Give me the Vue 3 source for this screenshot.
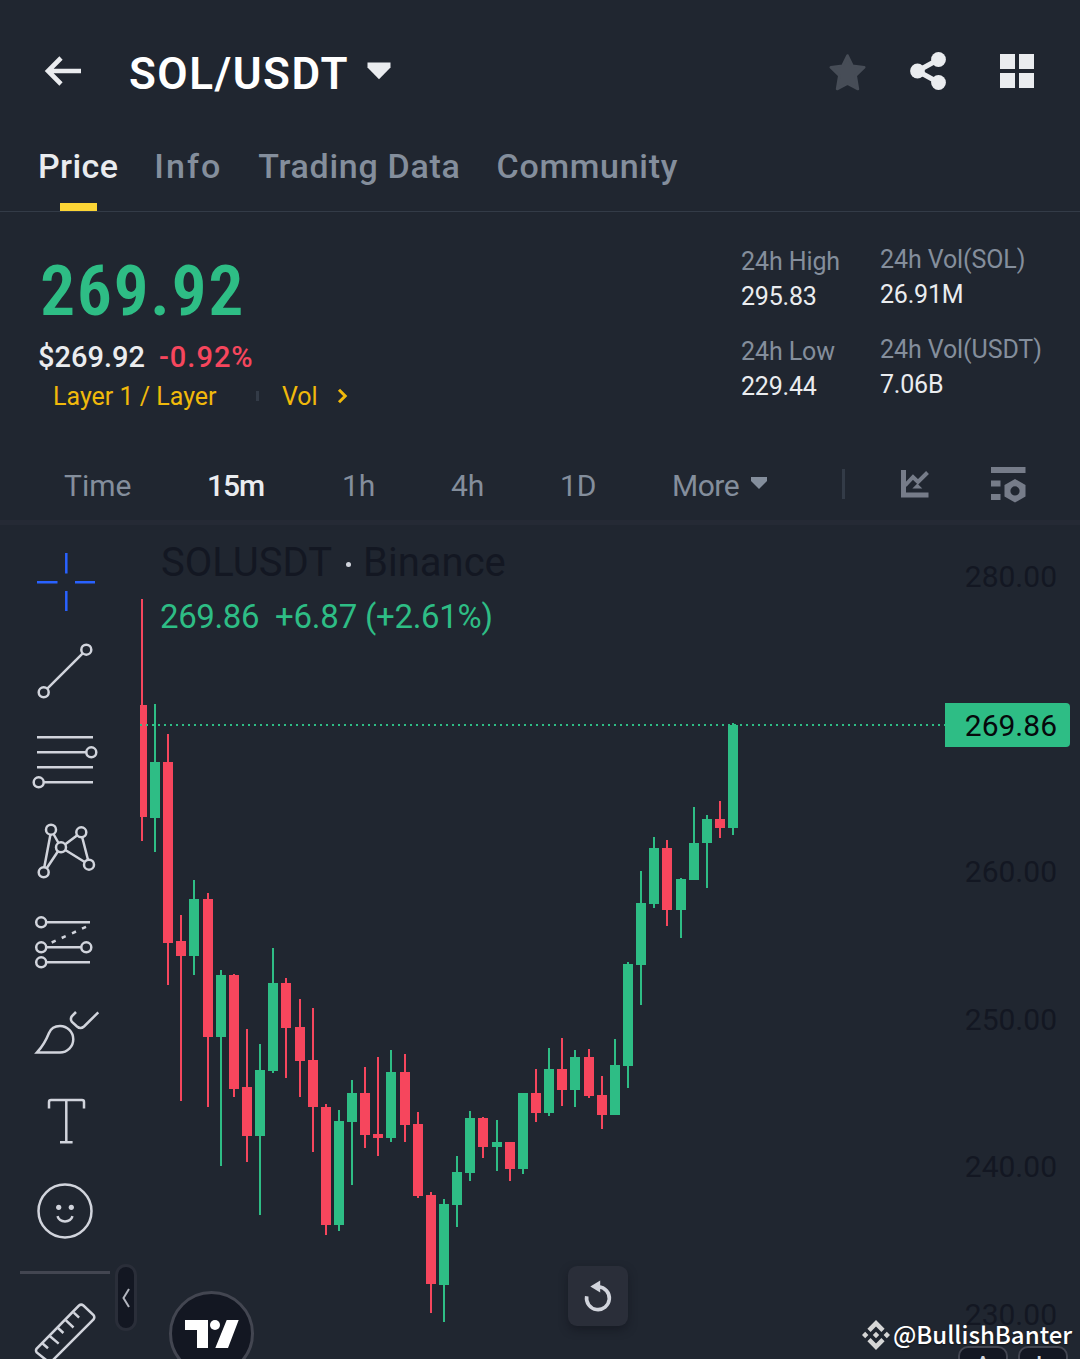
<template>
  <div class="page">
    <header class="header">
      <svg class="back" width="38" height="30" viewBox="0 0 38 30">
        <path d="M17 2 4 15l13 13M4 15h33" fill="none" stroke="#eaecef" stroke-width="4.6" />
      </svg>
      <h1 class="title">SOL/USDT</h1>
      <svg class="caret" width="24" height="18" viewBox="0 0 24 18">
        <path d="M0.5 0.5h23v5L12 17.3 0.5 5.5z" fill="#eaecef" />
      </svg>
      <div class="actions">
        <svg class="star" width="38" height="39" viewBox="0 0 38 39">
          <path
            d="M18.5 3.5l5 10.3 11.7 1.5-8.5 8.3 2.2 13.4L18.5 31.6 8.1 37l2.2-13.4-8.5-8.3 11.7-1.5z"
            fill="#474d57"
            stroke="#474d57"
            stroke-width="2.6"
            stroke-linejoin="round"
          />
        </svg>
        <svg width="37" height="38" viewBox="0 0 37 38">
          <path d="M28.5 7.5 7.5 19l21 11.5" fill="none" stroke="#eaecef" stroke-width="5" />
          <circle cx="28.5" cy="7.5" r="7.4" fill="#eaecef" />
          <circle cx="7.5" cy="19" r="7.4" fill="#eaecef" />
          <circle cx="28.5" cy="30.5" r="7.4" fill="#eaecef" />
        </svg>
        <svg width="34" height="34" viewBox="0 0 34 34">
          <path d="M0 0h15v15H0zM19 0h15v15H19zM0 19h15v15H0zM19 19h15v15H19z" fill="#eaecef" />
        </svg>
      </div>
    </header>

    <nav class="tabs">
      <span
        v-for="tab in tabs"
        :key="tab"
        class="tab"
        :class="{ active: tab === activeTab }"
        @click="activeTab = tab"
      >{{ tab }}</span>
    </nav>

    <section class="summary">
      <div class="price-box">
        <div class="price">269.92</div>
        <div class="sub-price">
          <span class="fiat">$269.92</span>
          <span class="change">-0.92%</span>
        </div>
        <div class="tags">
          <span class="tag-name">Layer 1 / Layer</span>
          <i class="tag-line"></i>
          <span class="tag-vol">Vol</span>
          <svg width="11" height="16" viewBox="0 0 11 16">
            <path d="M2 1.8 8.2 8 2 14.2" fill="none" stroke="#f0b90b" stroke-width="3" />
          </svg>
        </div>
      </div>
      <div v-for="(col, i) in stats" :key="i" class="stats">
        <div v-for="item in col" :key="item.label" class="stat">
          <div class="stat-label">{{ item.label }}</div>
          <div class="stat-value">{{ item.value }}</div>
        </div>
      </div>
    </section>

    <div class="intervals">
      <span
        v-for="item in intervals"
        :key="item"
        class="interval"
        :class="{ active: item === activeInterval }"
        @click="activeInterval = item"
      >{{ item }}</span>
      <span class="more">More</span>
      <svg class="more-caret" width="16" height="12" viewBox="0 0 16 12">
        <path d="M0 0h16v4l-8 8-8-8z" fill="#848e9c" />
      </svg>
      <i class="split"></i>
      <svg class="chart-icon" width="28" height="28" viewBox="0 0 28 28">
        <path d="M2.5 0v25H27.5" fill="none" stroke="#767c89" stroke-width="5" />
        <path d="M4 15.5l8-8.5 5 5L26.5 2.5" fill="none" stroke="#767c89" stroke-width="4" />
        <path d="M16.3 13.5l5 5h-10z" fill="#767c89" />
      </svg>
      <svg width="35" height="36" viewBox="0 0 35 36">
        <path d="M0 0h34.5v6H0zM0 13.5h9.5v6H0zM0 27h9.5v6H0z" fill="#767c89" />
        <path
          d="M24 12l10.5 6v11.5L24 35.5l-10.5-6V18zM24 19.3a4.6 4.6 0 1 0 0 9.2 4.6 4.6 0 0 0 0-9.2z"
          fill="#767c89"
          fill-rule="evenodd"
        />
      </svg>
    </div>

    <main class="chart">
      <aside class="tools">
        <svg v-for="tool in tools" :key="tool.name" class="tool" :class="tool.name" viewBox="0 0 130 90">
          <path :d="tool.path" />
          <circle v-for="(c, i) in tool.circles" :key="i" :cx="c[0]" :cy="c[1]" :r="c[2] || 5" />
          <circle v-for="(c, i) in tool.dots" :key="'d' + i" class="dot" :cx="c[0]" :cy="c[1]" :r="c[2]" />
        </svg>
        <div class="tools-line"></div>
        <svg class="tool" viewBox="0 0 130 90">
          <path d="M79 31.5q2.2-1.8 4.4 0L93.5 41q1.6 2.2 0 4.4L50 89 36.7 78.5q-1.4-2 0-4z" />
          <path d="M42.3 69.3l5.7 5M49.7 62l9 7.6M58 54l5.4 5M65.7 46.2l7.8 7.3M73.8 38.7l5.3 5" />
        </svg>
      </aside>

      <svg class="plot" width="950" height="834" viewBox="130 525 950 834">
        <g v-for="c in candles" :key="c[0]" :fill="c[1] ? '#2ebd85' : '#f6465d'">
          <rect :x="c[0] - 1" :y="c[2]" width="2" :height="c[5] - c[2]" />
          <rect
            :x="Math.max(c[0] - 5, 140)"
            :y="c[3]"
            :width="c[0] + 5 - Math.max(c[0] - 5, 140)"
            :height="c[4] - c[3]"
          />
        </g>
        <path d="M140 725H945" stroke="#2ebd85" stroke-width="2" stroke-dasharray="2 4" />
        <text v-for="t in ticks" :key="t.label" class="tick" x="1057" :y="t.y">{{ t.label }}</text>
        <path d="M945 703h121a4 4 0 0 1 4 4v36a4 4 0 0 1-4 4H945z" fill="#2ebd85" />
        <text class="tick current" x="1057" y="736">269.86</text>
      </svg>

      <div class="legend">
        <div class="legend-name"><span>SOLUSDT</span><i></i><span class="exchange">Binance</span></div>
        <div class="legend-values">
          <span class="last">269.86</span>
          <span class="diff">+6.87</span>
          <span class="percent">(+2.61%)</span>
        </div>
      </div>

      <div class="collapse">
        <svg width="8" height="20" viewBox="0 0 8 20">
          <path d="M7 1 1.5 10 7 19" fill="none" stroke="#b2b5be" stroke-width="2" />
        </svg>
      </div>

      <div class="tv">
        <svg width="54" height="28" viewBox="0 0 54 28">
          <path d="M0 0h23v28H12V10H0zM41.7 0h12L43 28H30.3z" fill="#fff" />
          <circle cx="30" cy="5" r="5" fill="#fff" />
        </svg>
      </div>

      <button class="reset">
        <svg width="30" height="32" viewBox="0 0 30 32">
          <path d="M3.7 16.3A11.4 11.4 0 1 0 15.5 6.8" fill="none" stroke="#d1d4dc" stroke-width="3.6" />
          <path d="M7.3 6.5 17.2 0.6v11.8z" fill="#d1d4dc" />
        </svg>
      </button>

      <div class="scale-btn auto">A</div>
      <div class="scale-btn log">L</div>

      <div class="author">
        <svg width="28" height="30" viewBox="0 0 28 30">
          <path
            d="M14 0l8.6 8.8-3.2 3.3L14 6.6l-5.4 5.5-3.2-3.3zM14 30l8.6-8.8-3.2-3.3-5.4 5.5-5.4-5.5-3.2 3.3zM3.2 11.8L6.4 15l-3.2 3.2L0 15zM14 11.8l3.2 3.2-3.2 3.2-3.2-3.2zM24.8 11.8L28 15l-3.2 3.2-3.2-3.2z"
            fill="#d6d6d6"
          />
        </svg>
        <span>@BullishBanter</span>
      </div>
    </main>
  </div>
</template>

<script setup>
import { ref } from 'vue';

const tabs = ['Price', 'Info', 'Trading Data', 'Community'];
const activeTab = ref('Price');

const intervals = ['Time', '15m', '1h', '4h', '1D'];
const activeInterval = ref('15m');

const stats = [
  [
    { label: '24h High', value: '295.83' },
    { label: '24h Low', value: '229.44' },
  ],
  [
    { label: '24h Vol(SOL)', value: '26.91M' },
    { label: '24h Vol(USDT)', value: '7.06B' },
  ],
];

const ticks = [
  { label: '280.00', y: 587 },
  { label: '260.00', y: 882 },
  { label: '250.00', y: 1030 },
  { label: '240.00', y: 1177 },
  { label: '230.00', y: 1325 },
];

const tools = [
  { name: 'cross', path: 'M66.3 16v20.5M66.3 54v20M37 45.2h20.5M75 45.2h20' },
  { name: 'trend', path: 'M47.3 61.7 82.7 26.3', circles: [[86.3, 22.7], [43.7, 65.3]] },
  {
    name: 'fib',
    path: 'M37 20.3h56M37 35.3h49M37 50.3h56M44 65.3h49',
    circles: [[91.3, 35.3], [38.7, 65.3]],
  },
  {
    name: 'pattern',
    path: 'M53.5 27l5 9M50.4 27.7 44.3 60.3M46.7 61.3 58 44.3M65.3 37.3 77.3 28.3M82.2 30.3 88 52.7M65.3 43 84.7 55',
    circles: [[51, 22.7], [81.3, 25.3], [61, 40.3], [43.7, 65.3], [89, 57.7]],
  },
  {
    name: 'forecast',
    path: 'M46 25.3h44M46 50.3h35.3M46 65.3h44M51.7 45.5l4-1.8M61.7 41l4-1.8M72 36.3l4-1.8M82 31.6l4-1.8',
    circles: [[41.2, 25.3], [41.2, 50.3], [86.3, 50.3], [41.2, 65.3]],
  },
  {
    name: 'brush',
    path: 'M37 65.4C44 58 47 51 49 46 51 41 55 38.9 60 38.9A13.2 13.2 0 0 1 60 65.4zM76 25l-4 4q-2.2 3 0 6l5 4.5q3.5 3 7 0L98.3 25.3',
  },
  { name: 'text', path: 'M49 31.5V25q0-2 2-2h31q2 0 2 2v6.5M66.3 23v42.3M60 65.3h12.6' },
  {
    name: 'emoji',
    path: 'M57.5 49.2a7.8 7.2 0 0 0 15 0',
    circles: [[65, 44, 26.5]],
    dots: [[58.7, 40.3, 2.6], [71.3, 40.3, 2.6]],
  },
];

// [x, rising, wick top, body top, body bottom, wick bottom]
const candles = [
  [142, 0, 599, 705, 817, 841],
  [155, 1, 704, 762, 818, 852],
  [168, 0, 734, 762, 943, 985],
  [181, 0, 915, 941, 956, 1101],
  [194, 1, 880, 899, 956, 975],
  [208, 0, 893, 899, 1037, 1107],
  [221, 1, 970, 975, 1037, 1166],
  [234, 0, 974, 975, 1089, 1097],
  [247, 0, 1029, 1087, 1136, 1162],
  [260, 1, 1044, 1070, 1136, 1215],
  [273, 1, 948, 983, 1071, 1073],
  [286, 0, 978, 983, 1028, 1078],
  [300, 0, 999, 1027, 1061, 1097],
  [313, 0, 1008, 1060, 1107, 1152],
  [326, 0, 1104, 1107, 1225, 1235],
  [339, 1, 1110, 1121, 1225, 1231],
  [352, 1, 1080, 1093, 1122, 1185],
  [365, 0, 1067, 1093, 1135, 1148],
  [378, 0, 1057, 1134, 1138, 1156],
  [391, 1, 1050, 1072, 1138, 1142],
  [405, 0, 1054, 1072, 1125, 1142],
  [418, 0, 1112, 1124, 1196, 1198],
  [431, 0, 1192, 1195, 1284, 1313],
  [444, 1, 1199, 1204, 1285, 1322],
  [457, 1, 1156, 1172, 1205, 1227],
  [470, 1, 1111, 1118, 1173, 1181],
  [483, 0, 1117, 1118, 1147, 1158],
  [497, 1, 1120, 1142, 1147, 1171],
  [510, 0, 1142, 1142, 1169, 1181],
  [523, 1, 1093, 1093, 1169, 1174],
  [536, 0, 1069, 1093, 1113, 1122],
  [549, 1, 1048, 1069, 1113, 1116],
  [562, 0, 1038, 1069, 1090, 1106],
  [575, 1, 1050, 1057, 1090, 1107],
  [589, 0, 1049, 1057, 1096, 1098],
  [602, 0, 1076, 1095, 1115, 1129],
  [615, 1, 1039, 1065, 1115, 1115],
  [628, 1, 962, 964, 1066, 1088],
  [641, 1, 871, 903, 965, 1005],
  [654, 1, 837, 848, 904, 908],
  [667, 0, 840, 848, 910, 926],
  [681, 1, 878, 879, 910, 938],
  [694, 1, 807, 843, 880, 880],
  [707, 1, 815, 819, 843, 888],
  [720, 0, 801, 819, 828, 838],
  [733, 1, 723, 725, 828, 835],
];
</script>

<style>
body {
  background: #202630;
}
</style>

<style scoped>
.page {
  width: 1080px;
  height: 1359px;
  overflow: hidden;
  display: flex;
  flex-direction: column;
  background: #202630;
  color: #eaecef;
  font-family: Roboto, sans-serif;
  white-space: nowrap;
}

svg {
  display: block;
  flex: none;
}

.header {
  display: flex;
  align-items: center;
  height: 143px;
  padding: 0 46px 0 44px;
}

.title {
  width: 238px;
  margin: 4px 0 0 47px;
  font-size: 44px;
  font-weight: 600;
  line-height: 60px;
  letter-spacing: 1.5px;
  color: #fff;
}

.back,
.caret {
  margin-bottom: 1px;
}

.actions {
  display: flex;
  align-items: center;
  margin: 0 0 2px auto;
}

.star {
  margin-top: 2px;
}

.actions svg + svg {
  margin-left: 43px;
}

.actions svg + svg + svg {
  margin-left: 53px;
}

.tabs {
  display: flex;
  height: 68px;
  padding-left: 38px;
  gap: 36px;
  border-bottom: 1px solid #333b47;
}

.tab {
  display: flex;
  flex-direction: column;
  align-items: center;
  justify-content: space-between;
  font-size: 34px;
  font-weight: 500;
  line-height: 46px;
  letter-spacing: 0.7px;
  color: #848e9c;
}

.tab:nth-child(1) {
  letter-spacing: 0.4px;
}

.tab:nth-child(2) {
  letter-spacing: 2px;
}

.tab.active {
  color: #eaecef;
}

.tab.active::after {
  content: '';
  width: 37px;
  height: 8px;
  background: #fcd535;
}

.summary {
  display: flex;
  height: 237px;
}

.price-box {
  box-sizing: border-box;
  width: 741px;
  padding: 44px 0 0 39px;
}

.price {
  height: 70px;
  line-height: 70px;
  font-size: 70px;
  font-weight: 600;
  font-stretch: 75%;
  letter-spacing: 1.5px;
  text-indent: 1px;
  color: #2ebd85;
}

.sub-price {
  display: flex;
  height: 40px;
  margin-top: 11px;
  line-height: 40px;
  font-size: 29px;
  font-weight: 500;
}

.fiat {
  width: 121px;
  margin-left: -1px;
}

.change {
  letter-spacing: 1px;
  color: #f6465d;
}

.tags {
  display: flex;
  align-items: center;
  height: 38px;
  padding-left: 14px;
  font-size: 25px;
  color: #f0b90b;
}

.tag-name {
  width: 203px;
}

.tag-line {
  width: 3px;
  height: 10px;
  margin-right: 23px;
  background: #333b47;
}

.tag-vol {
  width: 55px;
}

.stats {
  width: 139px;
  padding-top: 32px;
  font-size: 25px;
  line-height: 35px;
}

.stats + .stats {
  padding-top: 30px;
}

.stat {
  height: 90px;
}

.stat-label {
  letter-spacing: -0.1px;
  color: #848e9c;
}

.stat-value {
  letter-spacing: -0.2px;
}

.intervals {
  display: flex;
  align-items: center;
  height: 71px;
  padding-left: 64px;
  border-bottom: 5px solid #252a35;
  font-size: 30px;
  color: #848e9c;
}

.interval {
  width: 109px;
  padding-top: 1px;
}

.interval:nth-child(1) {
  width: 143px;
}

.interval:nth-child(2) {
  width: 135px;
}

.interval:nth-child(5) {
  width: 112px;
}

.interval.active {
  font-weight: 500;
  letter-spacing: -1px;
  color: #eaecef;
}

.more {
  width: 79px;
  padding-top: 1px;
  letter-spacing: -0.5px;
}

.more-caret {
  margin-bottom: 4px;
}

.split {
  width: 3px;
  height: 30px;
  margin: 0 56px 2px 75px;
  background: #333b47;
}

.chart-icon {
  margin: 0 62px 2px 0;
}

.chart {
  position: relative;
  display: flex;
  height: 834px;
}

.tools {
  width: 130px;
  padding-top: 12px;
}

.tool {
  width: 130px;
  height: 90px;
  fill: none;
  stroke: #d1d4dc;
  stroke-width: 2.5;
}

.tool.cross {
  stroke: #2962ff;
}

.tool .dot {
  fill: #d1d4dc;
  stroke: none;
}

.tools-line {
  width: 90px;
  height: 3px;
  margin: 14px 0 0 20px;
  background: #434651;
}

.tick {
  font-size: 30px;
  text-anchor: end;
  fill: #131722;
}

.tick.current {
  fill: #06090c;
}

.legend {
  position: absolute;
  top: 12px;
  left: 161px;
}

.legend-name {
  display: flex;
  align-items: center;
  height: 50px;
  font-size: 40px;
  color: #131722;
}

.legend-name i {
  width: 5px;
  height: 5px;
  margin: 4px 13px 0 14px;
  border-radius: 50%;
  background: #d1d4dc;
}

.exchange {
  margin-left: -1px;
}

.legend-values {
  display: flex;
  height: 58px;
  margin-top: 1px;
  line-height: 58px;
  font-size: 33px;
  color: #2ebd85;
}

.last {
  width: 113px;
  margin-left: -1px;
  letter-spacing: -0.4px;
}

.diff {
  width: 90px;
  margin-left: 2px;
  letter-spacing: -0.2px;
}

.percent {
  letter-spacing: -0.3px;
}

.collapse {
  position: absolute;
  top: 739px;
  left: 115px;
  display: flex;
  align-items: center;
  justify-content: center;
  box-sizing: border-box;
  width: 22px;
  height: 67px;
  border: 3px solid #2a2e39;
  border-radius: 11px;
  background: #131722;
}

.tv {
  position: absolute;
  top: 766px;
  left: 169px;
  display: flex;
  align-items: center;
  justify-content: center;
  box-sizing: border-box;
  width: 85px;
  height: 85px;
  border: 3px solid #434651;
  border-radius: 50%;
  background: #131722;
}

.reset {
  position: absolute;
  top: 741px;
  left: 568px;
  display: flex;
  align-items: center;
  justify-content: center;
  width: 60px;
  height: 60px;
  padding: 0;
  border: 0;
  border-radius: 9px;
  background: #2a2e39;
  box-shadow: 0 4px 8px rgba(16, 18, 26, 0.5);
}

.scale-btn {
  position: absolute;
  top: 821px;
  box-sizing: border-box;
  width: 50px;
  height: 50px;
  border: 2px solid #434651;
  border-radius: 10px;
  background: #131722;
  font-size: 28px;
  line-height: 38px;
  text-align: center;
  color: #d1d4dc;
}

.auto {
  left: 958px;
}

.log {
  left: 1018px;
}

.author {
  position: absolute;
  top: 792px;
  left: 862px;
  display: flex;
  align-items: center;
  height: 36px;
  gap: 3px;
  font-family: 'Noto Sans CJK SC', sans-serif;
  font-size: 24px;
  font-weight: 500;
  color: #fff;
  text-shadow: 0 1px 2px rgba(0, 0, 0, 0.5);
}

.author span {
  padding-bottom: 4px;
}
</style>
